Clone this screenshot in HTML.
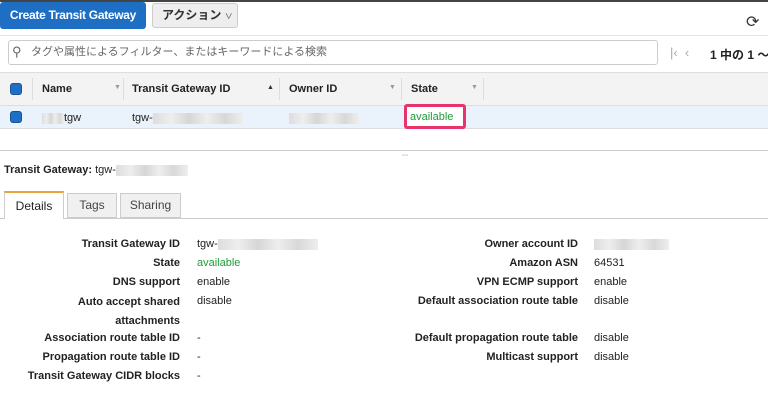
<!DOCTYPE html>
<html><head><meta charset="utf-8"><style>
*{box-sizing:border-box;margin:0;padding:0}
body{width:768px;height:407px;overflow:hidden;background:#fff;font-family:"Liberation Sans","Noto Sans CJK JP",sans-serif;font-size:11px;color:#222;position:relative}
.a{position:absolute;white-space:nowrap}
.blur{background:linear-gradient(90deg,#ddd,#eee 20%,#d6d6d6 40%,#eee 60%,#d8d8d8 80%,#eee);display:inline-block;height:11px;vertical-align:middle}
.lbl{font-weight:bold;text-align:right;width:180px}
.cb{width:12px;height:12px;background:#1f6fc5;border-radius:3px;border:1px solid #15549a}
</style></head><body>
<div class="a" style="left:0;top:0;width:768px;height:2px;background:#444"></div>
<div class="a" style="left:0;top:2px;width:146px;height:27px;background:#1e6fc3;border-radius:3px;color:#fff;font-weight:bold;font-size:12px;line-height:27px;text-align:center;letter-spacing:-0.3px">Create Transit Gateway</div>
<div class="a" style="left:152px;top:3px;width:86px;height:25px;background:#eee;border:1px solid #ccc;border-radius:3px;font-weight:bold;font-size:12px;line-height:23px;padding-left:9px;color:#333">アクション <span style="font-size:8px;color:#777">∨</span></div>
<div class="a" style="left:746px;top:12px;font-size:16px;color:#333">⟳</div>
<div class="a" style="left:0;top:35px;width:768px;height:1px;background:#e4e4e4"></div>
<div class="a" style="left:8px;top:40px;width:650px;height:25px;border:1px solid #ccc;border-radius:3px;color:#666;font-size:11px;line-height:23px;padding-left:22px">タグや属性によるフィルター、またはキーワードによる検索</div>
<div class="a" style="left:12px;top:44px;font-size:13px;color:#666">&#9906;</div>
<div class="a" style="left:670px;top:45px;color:#aaa;font-size:13px">|‹ &nbsp;‹</div>
<div class="a" style="left:710px;top:46px;font-weight:bold;font-size:12px">1 中の 1 ～</div>
<div class="a" style="left:0;top:72px;width:768px;height:34px;background:#f3f3f3;border-top:1px solid #ddd;border-bottom:1px solid #ddd"></div>
<div class="a cb" style="left:10px;top:83px"></div>
<div class="a" style="left:32px;top:78px;width:1px;height:22px;background:#ddd"></div>
<div class="a" style="left:42px;top:83px;font-weight:bold">Name</div>
<div class="a" style="left:114px;top:84px;font-size:7px;color:#999">▼</div>
<div class="a" style="left:123px;top:78px;width:1px;height:22px;background:#ddd"></div>
<div class="a" style="left:132px;top:83px;font-weight:bold">Transit Gateway ID</div>
<div class="a" style="left:267px;top:84px;font-size:7px;color:#333">▲</div>
<div class="a" style="left:279px;top:78px;width:1px;height:22px;background:#ddd"></div>
<div class="a" style="left:289px;top:83px;font-weight:bold">Owner ID</div>
<div class="a" style="left:389px;top:84px;font-size:7px;color:#999">▼</div>
<div class="a" style="left:401px;top:78px;width:1px;height:22px;background:#ddd"></div>
<div class="a" style="left:411px;top:83px;font-weight:bold">State</div>
<div class="a" style="left:471px;top:84px;font-size:7px;color:#999">▼</div>
<div class="a" style="left:483px;top:78px;width:1px;height:22px;background:#ddd"></div>
<div class="a" style="left:0;top:106px;width:768px;height:23px;background:#eaf2fb;border-bottom:1px solid #ddd"></div>
<div class="a cb" style="left:10px;top:111px"></div>
<div class="a" style="left:42px;top:112px"><span class="blur" style="width:22px"></span>tgw</div>
<div class="a" style="left:132px;top:112px">tgw-<span class="blur" style="width:90px"></span></div>
<div class="a" style="left:289px;top:112px"><span class="blur" style="width:70px"></span></div>
<div class="a" style="left:404px;top:104px;width:62px;height:25px;border:3px solid #e8336b;border-radius:3px;background:#fff;color:#1d9d3a;line-height:20px;padding-left:3px">available</div>
<div class="a" style="left:0;top:150px;width:768px;height:1px;background:#ccc"></div>
<div class="a" style="left:402px;top:153px;font-size:6px;color:#aaa">▫▫▫</div>
<div class="a" style="left:4px;top:164px"><b>Transit Gateway:</b> tgw-<span class="blur" style="width:72px"></span></div>
<div class="a" style="left:0;top:218px;width:768px;height:1px;background:#ccc"></div>
<div class="a" style="left:4px;top:191px;width:60px;height:28px;background:#fff;border:1px solid #ccc;border-top:2px solid #e8a33d;border-bottom:none;line-height:26px;text-align:center;font-size:12px">Details</div>
<div class="a" style="left:67px;top:193px;width:50px;height:25px;background:#f0f0f0;border:1px solid #ccc;line-height:23px;text-align:center;font-size:12px;color:#444">Tags</div>
<div class="a" style="left:120px;top:193px;width:61px;height:25px;background:#f0f0f0;border:1px solid #ccc;line-height:23px;text-align:center;font-size:12px;color:#444">Sharing</div>
<div class="a lbl" style="left:0;top:238px">Transit Gateway ID</div><div class="a" style="left:197px;top:238px">tgw-<span class="blur" style="width:100px"></span></div>
<div class="a lbl" style="left:0;top:257px">State</div><div class="a" style="left:197px;top:257px;color:#1d9d3a">available</div>
<div class="a lbl" style="left:0;top:276px">DNS support</div><div class="a" style="left:197px;top:276px">enable</div>
<div class="a lbl" style="left:0;top:293px;line-height:19px">Auto accept shared<br>attachments</div><div class="a" style="left:197px;top:295px">disable</div>
<div class="a lbl" style="left:0;top:332px">Association route table ID</div><div class="a" style="left:197px;top:332px">-</div>
<div class="a lbl" style="left:0;top:351px">Propagation route table ID</div><div class="a" style="left:197px;top:351px">-</div>
<div class="a lbl" style="left:0;top:370px">Transit Gateway CIDR blocks</div><div class="a" style="left:197px;top:370px">-</div>
<div class="a lbl" style="left:398px;top:238px">Owner account ID</div><div class="a" style="left:594px;top:238px"><span class="blur" style="width:75px"></span></div>
<div class="a lbl" style="left:398px;top:257px">Amazon ASN</div><div class="a" style="left:594px;top:257px">64531</div>
<div class="a lbl" style="left:398px;top:276px">VPN ECMP support</div><div class="a" style="left:594px;top:276px">enable</div>
<div class="a lbl" style="left:378px;width:200px;top:295px">Default association route table</div><div class="a" style="left:594px;top:295px">disable</div>
<div class="a lbl" style="left:378px;width:200px;top:332px">Default propagation route table</div><div class="a" style="left:594px;top:332px">disable</div>
<div class="a lbl" style="left:398px;top:351px">Multicast support</div><div class="a" style="left:594px;top:351px">disable</div>
</body></html>
